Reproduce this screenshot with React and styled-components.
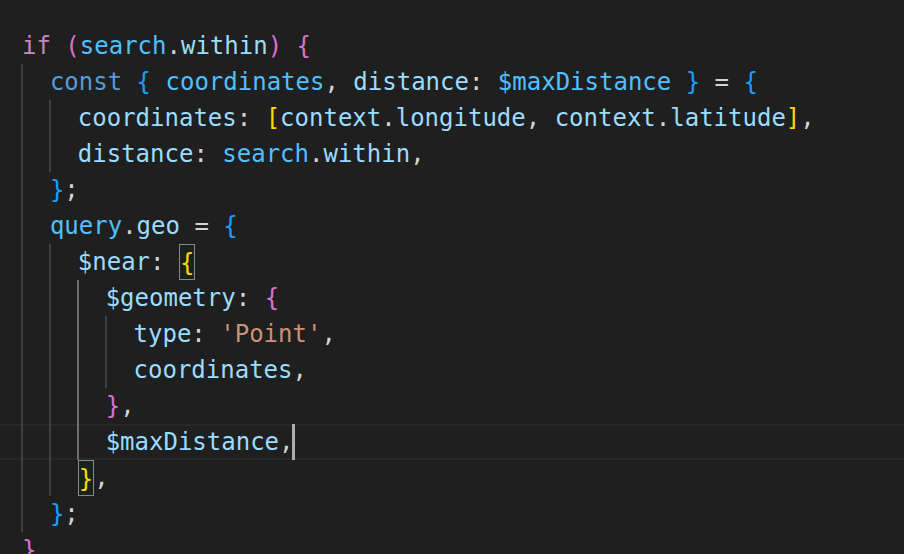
import React from 'react';
import { styled, createGlobalStyle } from 'styled-components';

const GlobalStyle = createGlobalStyle`
    html, body {
        margin: 0;
        padding: 0;
        background: #1f1f1f;
        overflow: hidden;
    }
`;

const colors = {
    kw: '#c586c0',
    st: '#569cd6',
    c: '#4fc1ff',
    v: '#9cdcfe',
    s: '#ce9178',
    p: '#d4d4d4',
    b1: '#da70d6',
    b2: '#179fff',
    b3: '#ffd700',
};

const Editor = styled.main`
    width: 904px;
    height: 554px;
    padding-top: 28px;
    box-sizing: border-box;
    background: #1f1f1f;
    font-family: "DejaVu Sans Mono", "Liberation Mono", monospace;
    font-size: 24px;
    color: #d4d4d4;
    overflow: hidden;
`;

const Line = styled.div`
    display: flex;
    align-items: stretch;
    height: 36px;
    line-height: 36px;
    padding-left: 22px;
    white-space: pre;
    box-shadow: ${p => p.$current ? 'inset 0 2px #282828, inset 0 -2px #282828' : 'none'};
`;

const Indent = styled.span`
    display: inline-block;
    width: 2ch;
    box-sizing: border-box;
    border-left: 2px solid ${p => p.$active ? '#6e6e6e' : '#404040'};
    margin-left: -1px;
    padding-left: 1px;
`;

const Token = styled.span`
    color: ${p => colors[p.$t]};
`;

const Match = styled.span`
    display: inline-block;
    height: 36px;
    box-sizing: border-box;
    border: 1px solid #888888;
    background: #18241a;
    color: ${p => colors[p.$t]};
`;

const Cursor = styled.span`
    display: inline-block;
    width: 3px;
    height: 36px;
    margin-left: -2px;
    background: #aeafad;
`;

const lines = [
    { indent: 0, tokens: [['kw', 'if'], ['p', ' '], ['b1', '('], ['c', 'search'], ['p', '.'], ['v', 'within'], ['b1', ')'], ['p', ' '], ['b1', '{']] },
    { indent: 1, tokens: [['st', 'const'], ['p', ' '], ['b2', '{'], ['p', ' '], ['c', 'coordinates'], ['p', ', '], ['v', 'distance'], ['p', ': '], ['c', '$maxDistance'], ['p', ' '], ['b2', '}'], ['p', ' = '], ['b2', '{']] },
    { indent: 2, tokens: [['v', 'coordinates'], ['p', ': '], ['b3', '['], ['v', 'context'], ['p', '.'], ['v', 'longitude'], ['p', ', '], ['v', 'context'], ['p', '.'], ['v', 'latitude'], ['b3', ']'], ['p', ',']] },
    { indent: 2, tokens: [['v', 'distance'], ['p', ': '], ['c', 'search'], ['p', '.'], ['v', 'within'], ['p', ',']] },
    { indent: 1, tokens: [['b2', '}'], ['p', ';']] },
    { indent: 1, tokens: [['c', 'query'], ['p', '.'], ['v', 'geo'], ['p', ' = '], ['b2', '{']] },
    { indent: 2, tokens: [['v', '$near'], ['p', ': '], ['b3', '{', 'match']] },
    { indent: 3, active: 2, tokens: [['v', '$geometry'], ['p', ': '], ['b1', '{']] },
    { indent: 4, active: 2, tokens: [['v', 'type'], ['p', ': '], ['s', "'Point'"], ['p', ',']] },
    { indent: 4, active: 2, tokens: [['v', 'coordinates'], ['p', ',']] },
    { indent: 3, active: 2, tokens: [['b1', '}'], ['p', ',']] },
    { indent: 3, active: 2, current: true, tokens: [['v', '$maxDistance'], ['p', ',']] },
    { indent: 2, tokens: [['b3', '}', 'match'], ['p', ',']] },
    { indent: 1, tokens: [['b2', '}'], ['p', ';']] },
    { indent: 0, tokens: [['b1', '}']] },
];

const App = () => {
    return (
        <>
            <GlobalStyle />
            <Editor>
                {lines.map((line, i) => (
                    <Line key={i} $current={line.current}>
                        {Array.from({ length: line.indent }).map((_, k) => (
                            <Indent key={k} $active={line.active === k} />
                        ))}
                        {line.tokens.map(([t, text, mark], k) => (
                            mark
                                ? <Match key={k} $t={t}>{text}</Match>
                                : <Token key={k} $t={t}>{text}</Token>
                        ))}
                        {line.current && <Cursor />}
                    </Line>
                ))}
            </Editor>
        </>
    );
};

export default App;
